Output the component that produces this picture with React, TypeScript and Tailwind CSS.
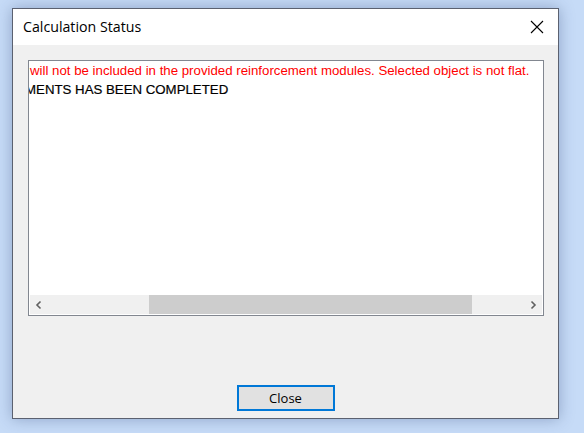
export default function App() {
  return (
    <div className="w-[584px] h-[433px] overflow-hidden bg-[#c6dbf7] pl-[12px] pt-[8px]">
      <div className="w-[547px] h-[411px] border border-[#5b6170] bg-[#f0f0f0] flex flex-col shadow-[0_0_14px_rgba(40,60,110,0.35)]">
        {/* title bar */}
        <div className="h-[36px] bg-white flex items-center justify-between pl-[10px] pr-[14px] shrink-0">
          <span className="text-[14.2px] text-black font-['Open_Sans',sans-serif] leading-none">Calculation Status</span>
          <svg width="14" height="14" viewBox="0 0 14 14" className="block">
            <path d="M1 1 L13 13 M13 1 L1 13" stroke="#000" strokeWidth="1.1" />
          </svg>
        </div>

        {/* log box */}
        <div className="mt-[15px] ml-[15px] w-[516px] h-[256px] border border-[#828790] bg-white flex flex-col">
          <div className="flex-1 overflow-hidden font-['Liberation_Sans',Arial,sans-serif] text-[13.25px] leading-[19px]">
            <div className="whitespace-nowrap text-[#ff0000] pl-px">
              will not be included in the provided reinforcement modules. Selected object is not flat.
            </div>
            <div className="whitespace-nowrap text-black -ml-[4px] [-webkit-text-stroke:0.2px_#000]">
              MENTS HAS BEEN COMPLETED
            </div>
          </div>
          {/* horizontal scrollbar */}
          <div className="h-[19px] mx-px mb-px bg-[#f0f0f0] flex items-center">
            <div className="w-[18px] h-full flex items-center justify-center">
              <svg width="8" height="10" viewBox="0 0 8 10">
                <path d="M5.5 1.5 L2 5 L5.5 8.5" fill="none" stroke="#606060" strokeWidth="1.6" />
              </svg>
            </div>
            <div className="w-[101px]" />
            <div className="w-[323px] h-full bg-[#cdcdcd]" />
            <div className="flex-1" />
            <div className="w-[18px] h-full flex items-center justify-center">
              <svg width="8" height="10" viewBox="0 0 8 10">
                <path d="M2.5 1.5 L6 5 L2.5 8.5" fill="none" stroke="#606060" strokeWidth="1.6" />
              </svg>
            </div>
          </div>
        </div>

        {/* footer */}
        <div className="flex-1 flex items-end justify-center pb-[7px]">
          <button className="w-[98px] h-[26px] border-2 border-[#0078d7] bg-[#e1e1e1] text-[13px] text-black font-['Open_Sans',sans-serif] leading-none">
            Close
          </button>
        </div>
      </div>
    </div>
  );
}
